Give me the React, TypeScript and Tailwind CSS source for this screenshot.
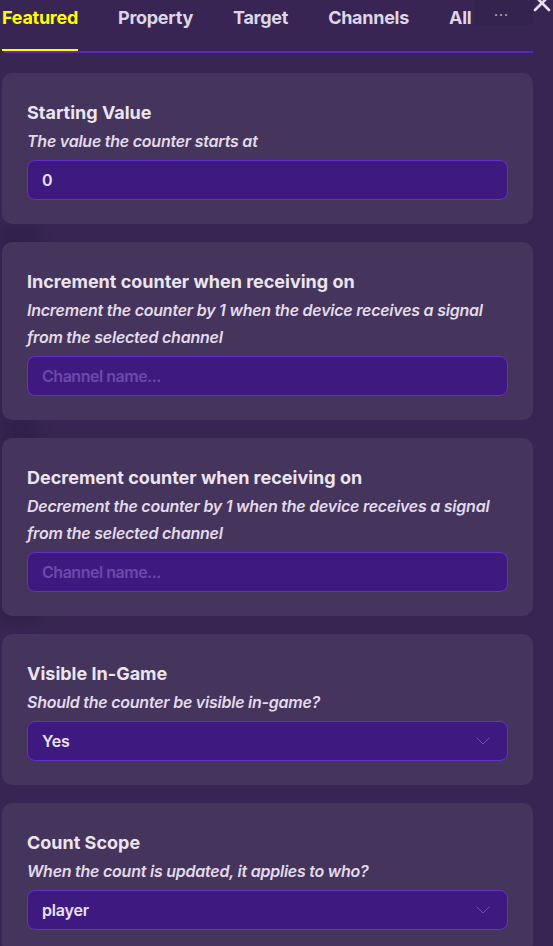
import { ChevronDown } from "lucide-react";

type Field = {
  title: string;
  desc: string;
  kind: "input" | "select";
  value?: string;
  placeholder?: string;
};

const fields: Field[] = [
  { title: "Starting Value", desc: "The value the counter starts at", kind: "input", value: "0" },
  {
    title: "Increment counter when receiving on",
    desc: "Increment the counter by 1 when the device receives a signal from the selected channel",
    kind: "input",
    placeholder: "Channel name...",
  },
  {
    title: "Decrement counter when receiving on",
    desc: "Decrement the counter by 1 when the device receives a signal from the selected channel",
    kind: "input",
    placeholder: "Channel name...",
  },
  { title: "Visible In-Game", desc: "Should the counter be visible in-game?", kind: "select", value: "Yes" },
  { title: "Count Scope", desc: "When the count is updated, it applies to who?", kind: "select", value: "player" },
];

const tabs = ["Featured", "Property", "Target", "Channels", "All Options"];

function Card({ f }: { f: Field }) {
  return (
    <div className="rounded-[10px] bg-[#45345c] px-[25px] pt-[28px] pb-6">
      <div className="text-[18px] leading-6 font-bold tracking-[0] text-[#ebe5f0]">{f.title}</div>
      <div className="mt-[3px] pr-[10px] text-[16px] leading-[27px] italic font-semibold tracking-[-0.015em] text-[#e2dbea]">
        {f.desc}
      </div>
      <div className="mt-[5px] flex h-10 items-center justify-between rounded-lg border border-[#6431c9] bg-[#3e1a80] pl-[14px] pr-[12px]">
        {f.value ? (
          <span className="text-[16px] font-semibold tracking-[-0.01em] text-[#e9e2f2]">{f.value}</span>
        ) : (
          <span className="text-[16px] font-semibold tracking-[-0.03em] text-[#6c4aa9]">{f.placeholder}</span>
        )}
        {f.kind === "select" && <ChevronDown size={24} strokeWidth={1} className="text-[#6f51ad]" />}
      </div>
    </div>
  );
}

export default function App() {
  return (
    <div
      className="relative h-[946px] w-[553px] overflow-hidden bg-[#382553]"
      style={{ fontFamily: "Inter, 'Noto Sans', sans-serif" }}
    >
      {/* faint page showing through behind the panel */}
      <div className="pointer-events-none absolute left-0 top-[225px] h-[400px] w-[40px] bg-[#2f1e48] opacity-60 blur-[6px]" />

      {/* close */}
      <svg className="absolute right-[1px] top-[-7px]" width="20" height="20" viewBox="0 0 20 20">
        <path d="M3 3 L17 17 M17 3 L3 17" stroke="#e6e0ee" strokeWidth="2.6" strokeLinecap="round" />
      </svg>

      <div className="relative w-[533px] pl-[2px]">
        {/* tab bar */}
        <div className="relative flex h-[53px] items-start">
          <div className="flex w-[472px] gap-10 overflow-hidden whitespace-nowrap pt-[6px]">
            {tabs.map((t, i) => (
              <div
                key={t}
                className={`relative pb-[21px] text-[18px] leading-6 font-bold tracking-[-0.015em] ${
                  i === 0 ? "text-[#ffff00]" : "text-[#ddd6e6]"
                }`}
              >
                {t}
                {i === 0 && <div className="absolute bottom-[-1px] left-0 right-0 h-[3px] bg-[#ffff00]" />}
              </div>
            ))}
          </div>
          <div className="flex flex-1 justify-center bg-[#35234f] pt-[4px] pl-[4px] pr-[8px] text-[14px] tracking-[1px] text-[#cfc6dc]">
            ···
          </div>
          <div className="absolute bottom-0 left-[2px] right-0 h-[2px] bg-[#5a25c2]" />
        </div>

        <div className="mt-[20px] flex flex-col gap-[18px]">
          {fields.map((f) => (
            <Card key={f.title} f={f} />
          ))}
        </div>
      </div>
    </div>
  );
}
